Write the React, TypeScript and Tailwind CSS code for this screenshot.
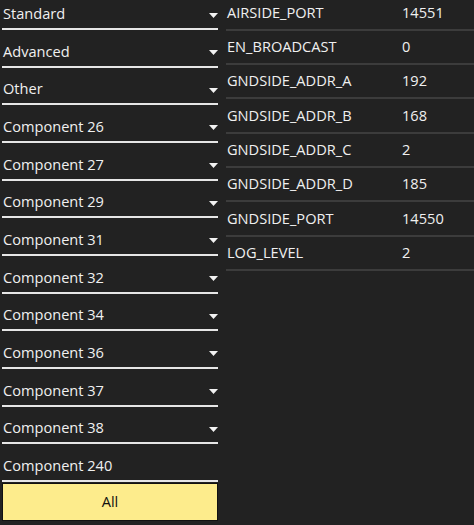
const groups = [
  "Standard",
  "Advanced",
  "Other",
  "Component 26",
  "Component 27",
  "Component 29",
  "Component 31",
  "Component 32",
  "Component 34",
  "Component 36",
  "Component 37",
  "Component 38",
];

const params: { name: string; value: string }[] = [
  { name: "AIRSIDE_PORT", value: "14551" },
  { name: "EN_BROADCAST", value: "0" },
  { name: "GNDSIDE_ADDR_A", value: "192" },
  { name: "GNDSIDE_ADDR_B", value: "168" },
  { name: "GNDSIDE_ADDR_C", value: "2" },
  { name: "GNDSIDE_ADDR_D", value: "185" },
  { name: "GNDSIDE_PORT", value: "14550" },
  { name: "LOG_LEVEL", value: "2" },
];

function Caret() {
  return (
    <svg width="9" height="5" viewBox="0 0 9 5" className="shrink-0 mt-[2px]">
      <path d="M0 0 L9 0 L4.5 5 Z" fill="#f2f2f2" />
    </svg>
  );
}

export default function App() {
  return (
    <div
      className="w-[474px] h-[525px] bg-[#222222] text-[#f0f0f0] flex overflow-hidden"
      style={{ fontFamily: '"Open Sans", "DejaVu Sans", sans-serif' }}
    >
      {/* Group list */}
      <div className="w-[218px] pl-[2px] flex flex-col gap-[7.67px] shrink-0">
        {groups.map((g) => (
          <div
            key={g}
            className="h-[30px] flex items-center justify-between border-b-2 border-[#e6e6e6] pl-[1px] text-[14.6px]"
          >
            <span>{g}</span>
            <Caret />
          </div>
        ))}
        <div className="flex flex-col">
          <div className="h-[30px] flex items-center border-b-2 border-[#e6e6e6] pl-[1px] text-[14.6px]">
            Component 240
          </div>
          <button
            type="button"
            className="mt-[1px] h-[38px] w-full bg-[#fdec8c] border border-[#111] text-[#111] text-[14.6px]"
          >
            All
          </button>
        </div>
      </div>

      {/* Parameter table */}
      <div className="flex-1 ml-[8px] -mt-[3.6px]">
        {params.map((p) => (
          <div
            key={p.name}
            className="h-[34.33px] flex items-center border-b-2 border-[#3c3c3c] text-[14.6px]"
          >
            <span className="w-[176px] pl-[1px]">{p.name}</span>
            <span>{p.value}</span>
          </div>
        ))}
      </div>
    </div>
  );
}
